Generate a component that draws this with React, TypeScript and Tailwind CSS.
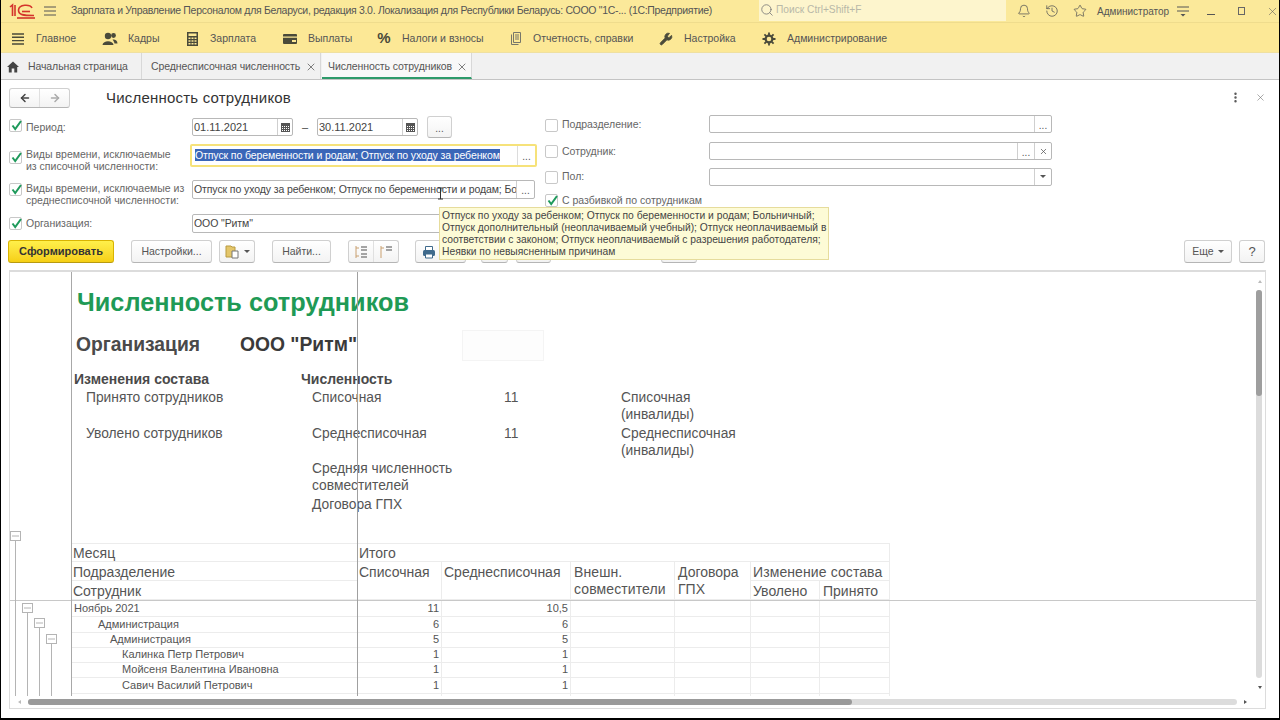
import type { ReactNode } from "react";
import {
  ArrowLeft,
  ArrowRight,
  Bell,
  History,
  MoreVertical,
  Search,
  Star,
  Wrench,
  X,
} from "lucide-react";

const Logo = () => (
  <svg width="26" height="16" viewBox="0 0 26 16" fill="none" stroke="#d4342c" strokeWidth="1.6">
    <path d="M1 4 L3.5 2 V13" />
    <path d="M6 2 V13" />
    <path d="M23 5 C21 1 10 1 9.5 7 C9.5 12 14 12.5 25 12.5" />
    <path d="M21 8.5 H13" />
    <path d="M8 15 H26" />
  </svg>
);

const Calendar = () => (
  <svg width="9" height="10" viewBox="0 0 9 10" fill="#555">
    <path fillRule="evenodd" d="M0 1h9v9H0zM1 4v1h1V4zm2 0v1h1V4zm2 0v1h1V4zm2 0v1h1V4zM1 6v1h1V6zm2 0v1h1V6zm2 0v1h1V6zm2 0v1h1V6zM1 8v1h1V8zm2 0v1h1V8zm2 0v1h1V8zm2 0v1h1V8z" />
  </svg>
);

const Gear = () => (
  <svg width="14" height="14" viewBox="0 0 14 14" fill="none" stroke="#4a4a3a">
    <circle cx="7" cy="7" r="3.4" strokeWidth="2.2" />
    <path d="M7 0.5V3M7 11V13.5M0.5 7H3M11 7H13.5M2.4 2.4L4.2 4.2M9.8 9.8L11.6 11.6M11.6 2.4L9.8 4.2M4.2 9.8L2.4 11.6" strokeWidth="1.8" />
  </svg>
);

const MenuItem = ({ icon, label, className }: { icon: ReactNode; label: string; className: string }) => (
  <div className={`flex items-center shrink-0 ${className}`}>
    <span className="flex w-[18px] h-4 items-center justify-center text-[#4a4a3a]">{icon}</span>
    <span className="ml-[9px] whitespace-nowrap">{label}</span>
  </div>
);

const Check = ({ on, className = "" }: { on?: boolean; className?: string }) => (
  <div className={`w-[13px] h-[13px] shrink-0 border border-[#c8c8c8] rounded-[2px] bg-white relative ${className}`}>
    {on && (
      <svg className="absolute left-0 -top-[1px]" width="13" height="13" viewBox="0 0 13 13" fill="none">
        <path d="M2.5 6.5 L5.2 10 L11 2" stroke="#1f9a5c" strokeWidth="2" />
      </svg>
    )}
  </div>
);

const Dots = () => <span className="text-[10px] leading-none text-[#555] mt-[3px]">...</span>;

const Caret = () => <span className="w-0 h-0 border-x-[3px] border-x-transparent border-t-[3px] border-t-[#555]" />;

const Btn = ({ children, className }: { children?: ReactNode; className: string }) => (
  <div className={`flex items-center justify-center shrink-0 rounded-[3px] border border-[#d0d0d0] border-b-[#b5b5b5] bg-gradient-to-b from-white to-[#f3f3f3] text-[#555] text-[10.5px] ${className}`}>
    {children}
  </div>
);

const Input = ({ width, height = "h-[19px]", children, text, textClass = "text-[10.5px] tracking-[-0.1px]" }: { width: string; height?: string; children?: ReactNode; text?: string; textClass?: string }) => (
  <div className={`flex items-stretch shrink-0 bg-white border border-[#b8b8b8] rounded-[2px] ${width} ${height}`}>
    <span className={`flex-1 min-w-0 overflow-hidden whitespace-nowrap pl-[1px] leading-[17px] text-[#444] ${textClass}`}>{text}</span>
    {children}
  </div>
);

const Side = ({ w = "w-[17px]", children }: { w?: string; children: ReactNode }) => (
  <span className={`flex shrink-0 items-center justify-center border-l border-[#cfcfcf] text-[#555] ${w}`}>{children}</span>
);

const FormLabel = ({ children, className = "" }: { children: ReactNode; className?: string }) => (
  <div className={`ml-[4px] w-[160px] text-[10.5px] leading-[12px] text-[#666] ${className}`}>{children}</div>
);

// rows of the report body
const rows = [
  { name: "Ноябрь 2021", indent: "pl-[2px]", a: "11", b: "10,5", h: "h-[16px]" },
  { name: "Администрация", indent: "pl-[26px]", a: "6", b: "6", h: "h-[15px]" },
  { name: "Администрация", indent: "pl-[38px]", a: "5", b: "5", h: "h-[15px]" },
  { name: "Калинка Петр Петрович", indent: "pl-[50px]", a: "1", b: "1", h: "h-[15px]" },
  { name: "Мойсеня Валентина Ивановна", indent: "pl-[50px]", a: "1", b: "1", h: "h-[16px]" },
  { name: "Савич Василий Петрович", indent: "pl-[50px]", a: "1", b: "1", h: "h-[15px]" },
  { name: "Мазур Светлана Петровна", indent: "pl-[50px]", a: "1", b: "1", h: "h-[15px]" },
];

const tableCols = "grid grid-cols-[286px_84px_129px_104px_76px_69px_70px]";
const cell = "border-r border-b border-[#ececec]";

export default function App() {
  return (
    <div className="relative w-[1280px] h-[720px] overflow-hidden flex flex-col bg-white border-l border-r border-b-2 border-black font-['Liberation_Sans',Arial,sans-serif] text-[#444]">
      {/* title bar */}
      <div className="h-[23px] shrink-0 flex items-center bg-[#fbe99a] border-b border-[#efdc8d] text-[10.5px] text-[#555]">
        <div className="ml-[8px]"><Logo /></div>
        <svg className="ml-[9px]" width="12" height="12" viewBox="0 0 12 12" stroke="#555" strokeWidth="1"><path d="M0 2h12M0 6h12M0 10h12" /></svg>
        <span className="ml-[15px] w-[688px] whitespace-nowrap overflow-hidden tracking-[-0.3px]">Зарплата и Управление Персоналом для Беларуси, редакция 3.0. Локализация для Республики Беларусь: СООО "1С-... (1С:Предприятие)</span>
        <div className="w-[247px] h-[21px] -mt-[2px] flex items-center bg-[#fdf5cd] text-[#b8b8a8] text-[10.2px]">
          <Search size={14} strokeWidth={1.4} className="ml-[1px] text-[#777]" />
          <span className="ml-[2px]">Поиск Ctrl+Shift+F</span>
        </div>
        <Bell size={14} strokeWidth={1.3} className="ml-[11px]" />
        <History size={14} strokeWidth={1.3} className="ml-[14px]" />
        <Star size={14} strokeWidth={1.3} className="ml-[14px]" />
        <span className="ml-[10px] text-[10px] w-[71px] whitespace-nowrap">Администратор</span>
        <svg className="ml-[8px]" width="14" height="12" viewBox="0 0 14 12" fill="#555" stroke="#555" strokeWidth="1"><path d="M1 2h12M1 6h12" /><path d="M4.5 9 h5 l-2.5 2.5z" stroke="none" /></svg>
        <span className="ml-[17px] w-[8px] h-px bg-[#555] mt-[7px]" />
        <span className="ml-[23px] w-[7px] h-[8px] border border-[#666]" />
        <X size={13} strokeWidth={1} className="ml-[21px]" />
      </div>

      {/* section menu */}
      <div className="h-[30px] shrink-0 flex items-center pt-[2px] pl-[8px] bg-[#fce896] text-[10.5px] text-[#555] border-b border-[#efe0a0]">
        <MenuItem className="w-[92px]" label="Главное" icon={<svg width="14" height="12" viewBox="0 0 14 12" stroke="#4a4a3a" strokeWidth="1.4"><path d="M1 1h12M1 4.3h12M1 7.6h12M1 11h12" /></svg>} />
        <MenuItem className="w-[82px]" label="Кадры" icon={<svg width="16" height="14" viewBox="0 0 16 14" fill="#4a4a3a"><circle cx="6" cy="4" r="3.2" /><circle cx="11.5" cy="3.5" r="2.4" /><path d="M0.5 13 C1 8 11 8 11.5 13Z" /><path d="M10.5 7.5 C13 7 15.5 8.5 15.5 11.5 H12.5 C12.3 10 11.5 8.7 10.5 7.5Z" /></svg>} />
        <MenuItem className="w-[98px]" label="Зарплата" icon={<svg width="11" height="14" viewBox="0 0 11 14" fill="#4a4a3a"><path fillRule="evenodd" d="M0 0h11v14H0zM1.5 1.5v2.5h8V1.5zM1.5 5.5v1.6h2V5.5zm3 0v1.6h2V5.5zm3 0v1.6h2V5.5zM1.5 8.2v1.6h2V8.2zm3 0v1.6h2V8.2zm3 0v1.6h2V8.2zM1.5 11v1.6h2V11zm3 0v1.6h2V11zm3 0v1.6h2V11z" /></svg>} />
        <MenuItem className="w-[94px]" label="Выплаты" icon={<svg width="14" height="10" viewBox="0 0 14 10" fill="#4a4a3a"><path fillRule="evenodd" d="M1 0h12a1 1 0 0 1 1 1v8a1 1 0 0 1-1 1H1a1 1 0 0 1-1-1V1a1 1 0 0 1 1-1zM0 2.5h14v1.2H0zM9 6h4v2H9z" /></svg>} />
        <MenuItem className="w-[131px]" label="Налоги и взносы" icon={<span className="text-[15px] font-bold">%</span>} />
        <MenuItem className="w-[151px]" label="Отчетность, справки" icon={<svg width="13" height="15" viewBox="0 0 13 15" fill="none" stroke="#77776a"><path d="M4.5 1.5h7v10h-7zM2.5 3.5v10h7M6 4h4M6 6h4M6 8h4" /></svg>} />
        <MenuItem className="w-[103px]" label="Настройка" icon={<Wrench size={14} fill="currentColor" strokeWidth={1.5} />} />
        <MenuItem className="" label="Администрирование" icon={<Gear />} />
      </div>

      {/* open tabs */}
      <div className="h-[27px] shrink-0 flex items-stretch bg-[#f1f1f1] border-b border-[#c4c4c4] text-[10.5px] text-[#555]">
        <div className="w-[141px] flex items-center border-r border-[#d8d8d8] pt-[2px]">
          <svg className="ml-[6px]" width="12" height="12" viewBox="0 0 12 12" fill="#444"><path d="M6 0.5 L12 6 H10.2 V11.5 H7.3 V7.5 H4.7 V11.5 H1.8 V6 H0Z" /></svg>
          <span className="ml-[9px] whitespace-nowrap tracking-[-0.1px]">Начальная страница</span>
        </div>
        <div className="w-[179px] flex items-center border-r border-[#d8d8d8] pl-[9px] pt-[2px]">
          <span className="w-[150px] whitespace-nowrap tracking-[-0.1px]">Среднесписочная численность</span>
          <X size={12} strokeWidth={1.5} className="ml-[4px]" />
        </div>
        <div className="ml-[1px] w-[150px] flex items-center bg-[#f8f8f8] border-r border-[#d8d8d8] border-b-2 border-b-[#2d9a6a] pl-[6px] pt-[3px]">
          <span className="w-[127px] whitespace-nowrap tracking-[-0.1px]">Численность сотрудников</span>
          <X size={12} strokeWidth={1.5} className="ml-[1px]" />
        </div>
      </div>

      {/* form header */}
      <div className="h-[33px] shrink-0 flex items-center pl-[8px] pr-[13px] pt-[2px]">
        <div className="flex w-[61px] h-[20px] rounded-[3px] border border-[#d0d0d0] border-b-[#b5b5b5] bg-gradient-to-b from-white to-[#f3f3f3]">
          <span className="flex-1 flex items-center justify-center border-r border-[#e0e0e0]"><ArrowLeft size={12} strokeWidth={3} className="text-[#444]" /></span>
          <span className="flex-1 flex items-center justify-center"><ArrowRight size={12} strokeWidth={3} className="text-[#aaa]" /></span>
        </div>
        <h1 className="ml-[36px] mt-[1px] text-[15px] tracking-[0.2px] text-[#333]">Численность сотрудников</h1>
        <MoreVertical size={13} strokeWidth={2.5} className="ml-auto mr-[13px] text-[#555]" />
        <X size={11} strokeWidth={1.2} className="text-[#666]" />
      </div>

      {/* filter form */}
      <div className="h-[126px] shrink-0 flex pl-[8px]">
        <div className="w-[536px] shrink-0 flex flex-col pt-[1px]">
          <div className="h-[26px] flex items-center">
            <Check on className="-mt-[3px]" />
            <FormLabel>Период:</FormLabel>
            <div className="ml-[6px] flex items-center">
              <Input width="w-[101px]" height="h-[18px]" text="01.11.2021" textClass="text-[11px]"><Side w="w-[15px]"><Calendar /></Side></Input>
              <span className="w-[24px] text-center text-[11px]">–</span>
              <Input width="w-[101px]" height="h-[18px]" text="30.11.2021" textClass="text-[11px]"><Side w="w-[15px]"><Calendar /></Side></Input>
              <Btn className="ml-[9px] w-[25px] h-[22px]"><Dots /></Btn>
            </div>
          </div>
          <div className="h-[30px] flex items-center">
            <Check on className="mt-[4px]" />
            <FormLabel className="mt-[10px]">Виды времени, исключаемые<br />из списочной численности:</FormLabel>
            <div className="ml-[4px] flex w-[347px] h-[23px] bg-white border-2 border-[#f6e27a] rounded-[2px] pl-[3px] items-center">
              <span className="flex-1 min-w-0 whitespace-nowrap overflow-hidden text-[10.5px] tracking-[-0.1px] leading-[13px]">
                <span className="bg-[#3a66b8] text-white">Отпуск по беременности и родам; Отпуск по уходу за ребенком</span>
              </span>
              <span className="w-[18px] h-full flex items-center justify-center border-l border-[#dcdcdc]"><Dots /></span>
            </div>
          </div>
          <div className="h-[38px] flex items-center">
            <Check on />
            <FormLabel className="mt-[10px]">Виды времени, исключаемые из<br />среднесписочной численности:</FormLabel>
            <div className="ml-[6px]">
              <Input width="w-[343px]" text="Отпуск по уходу за ребенком; Отпуск по беременности и родам; Больничный"><Side w="w-[18px]"><Dots /></Side></Input>
            </div>
          </div>
          <div className="h-[30px] flex items-center">
            <Check on />
            <FormLabel>Организация:</FormLabel>
            <div className="ml-[6px]">
              <Input width="w-[343px]" text={'ООО "Ритм"'} />
            </div>
          </div>
        </div>
        <div className="flex-1 flex flex-col -mt-[2px]">
          <div className="h-[26px] shrink-0 flex items-center">
            <Check className="mt-[2px]" />
            <span className="ml-[4px] mt-[2px] w-[147px] text-[10.5px] text-[#666]">Подразделение:</span>
            <Input width="w-[343px]" height="h-[18px]"><Side><Dots /></Side></Input>
          </div>
          <div className="h-[28px] shrink-0 flex items-center">
            <Check />
            <span className="ml-[4px] mt-[2px] w-[147px] text-[10.5px] text-[#666]">Сотрудник:</span>
            <Input width="w-[343px]" height="h-[18px]"><Side><Dots /></Side><Side><X size={9} /></Side></Input>
          </div>
          <div className="h-[23px] shrink-0 flex items-center">
            <Check className="mt-[1px]" />
            <span className="ml-[4px] w-[147px] text-[10.5px] text-[#666]">Пол:</span>
            <Input width="w-[343px]" height="h-[18px]"><Side><Caret /></Side></Input>
          </div>
          <div className="h-[25px] shrink-0 flex items-center">
            <Check on className="-mt-[1px]" />
            <span className="ml-[4px] text-[10.5px] text-[#666]">С разбивкой по сотрудникам</span>
          </div>
        </div>
      </div>

      {/* report toolbar */}
      <div className="h-[31px] shrink-0 flex items-start pl-[7px] pr-[14px] pt-[1px]">
        <div className="w-[106px] h-[23px] shrink-0 flex items-center justify-center rounded-[3px] border border-[#d9b400] border-b-[#b89a10] bg-gradient-to-b from-[#fff04a] to-[#f6cf12] text-[11px] font-bold text-[#333]">Сформировать</div>
        <Btn className="ml-[17px] w-[81px] h-[23px]">Настройки...</Btn>
        <Btn className="ml-[7px] w-[36px] h-[23px] gap-[3px]">
          <svg width="16" height="15" viewBox="0 0 16 15"><path d="M1 2h5l1 1h3v10H1z" fill="#e4c66a" stroke="#b89a40" /><path d="M7 7h6v7H7z" fill="#fff" stroke="#777" /></svg>
          <Caret />
        </Btn>
        <Btn className="ml-[17px] w-[59px] h-[23px]">Найти...</Btn>
        <div className="ml-[17px] flex w-[51px] h-[23px] shrink-0 rounded-[3px] border border-[#d0d0d0] border-b-[#b5b5b5] bg-gradient-to-b from-white to-[#f3f3f3]">
          <span className="flex-1 flex items-center justify-center border-r border-[#e0e0e0]">
            <svg width="14" height="14" viewBox="0 0 14 14" fill="none" stroke="#c9a070"><path d="M2 1v12M2 3h3M2 11h3" /><path d="M7 2h6M7 5h6M7 9h6M7 12h6" stroke="#888" strokeWidth="1.5" /></svg>
          </span>
          <span className="flex-1 flex items-center justify-center">
            <svg width="14" height="14" viewBox="0 0 14 14" fill="none" stroke="#c9a070"><path d="M2 1v12M2 3h3" /><path d="M7 2h6M7 5h6" stroke="#888" strokeWidth="1.5" /></svg>
          </span>
        </div>
        <Btn className="ml-[16px] w-[51px] h-[23px] justify-start pl-[6px]">
          <svg width="14" height="14" viewBox="0 0 14 14"><path d="M3.5 1.5h7v5h-7z" fill="#fff" stroke="#3f6a8c" /><rect x="1" y="5" width="12" height="6" rx="1.5" fill="#3f6a8c" /><path d="M3.5 9h7v4h-7z" fill="#fff" stroke="#3f6a8c" /></svg>
        </Btn>
        {/* these lie mostly behind the tooltip, only their lower edges show */}
        <Btn className="ml-[15px] w-[27px] h-[23px]" />
        <Btn className="ml-[8px] w-[35px] h-[23px]" />
        <Btn className="ml-[110px] w-[36px] h-[23px]" />
        <Btn className="ml-auto w-[48px] h-[23px] gap-[4px]">Еще<Caret /></Btn>
        <Btn className="ml-[7px] w-[26px] h-[23px] !text-[13px]">?</Btn>
      </div>

      {/* spreadsheet */}
      <div className="ml-[8px] mr-[13px] h-[439px] shrink-0 flex flex-col border-t-2 border-x border-b border-[#dcdcdc] overflow-hidden">
        <div className="flex-1 min-h-0 flex">
          <div className="relative flex-1 min-w-0 overflow-hidden">
            {/* report heading */}
            <div className="pl-[67px] h-[61px] flex items-center whitespace-nowrap text-[25.3px] font-bold text-[#1f9a56]">Численность сотрудников</div>
            <div className="pl-[66px] h-[24px] flex items-center whitespace-nowrap text-[19.3px] font-bold text-[#4a4a4a]">
              <span className="w-[164px]">Организация</span>
              <span className="text-[#3a3a3a]">ООО "Ритм"</span>
            </div>
            <div className="mt-[14px] pl-[64px] grid grid-cols-[227px_203px_117px_200px] text-[13.8px] leading-[17px] text-[#555]">
              <div className="font-bold text-[14px] text-[#4a4a4a] h-[18px]">Изменения состава</div>
              <div className="font-bold text-[14px] text-[#4a4a4a] col-span-3">Численность</div>
              <div className="pl-[12px] h-[36px]">Принято сотрудников</div>
              <div className="pl-[11px]">Списочная</div>
              <div>11</div>
              <div>Списочная<br />(инвалиды)</div>
              <div className="pl-[12px] h-[35px]">Уволено сотрудников</div>
              <div className="pl-[11px]">Среднесписочная</div>
              <div>11</div>
              <div>Среднесписочная<br />(инвалиды)</div>
              <div />
              <div className="pl-[11px] col-span-3 h-[36px]">Средняя численность<br />совместителей</div>
              <div />
              <div className="pl-[11px] col-span-3 h-[47px]">Договора ГПХ</div>
            </div>

            {/* column headers */}
            <div className={`ml-[62px] ${tableCols} w-[818px] border-t border-[#ececec] grid-rows-[18px_19px_19px] text-[14px] leading-[17px] text-[#555]`}>
              <div className={`${cell} pl-[1px] pt-[1px]`}>Месяц</div>
              <div className={`${cell} col-span-6 pl-[1px] pt-[1px]`}>Итого</div>
              <div className={`${cell} pl-[1px] pt-[2px]`}>Подразделение</div>
              <div className={`${cell} row-span-2 pl-[1px] pt-[2px]`}>Списочная</div>
              <div className={`${cell} row-span-2 pl-[2px] pt-[2px]`}>Среднесписочная</div>
              <div className={`${cell} row-span-2 pl-[3px] pt-[2px] tracking-[0.1px]`}>Внешн.<br />совместители</div>
              <div className={`${cell} row-span-2 pl-[3px] pt-[2px]`}>Договора<br />ГПХ</div>
              <div className={`${cell} col-span-2 pl-[2px] pt-[2px] whitespace-nowrap tracking-[0.1px]`}>Изменение состава</div>
              <div className={`${cell} pl-[1px] pt-[2px]`}>Сотрудник</div>
              <div className={`${cell} pl-[2px] pt-[2px]`}>Уволено</div>
              <div className={`${cell} pl-[3px] pt-[2px]`}>Принято</div>
            </div>
            <div className="h-px bg-[#c8c8c8]" />

            {/* body rows */}
            <div className="ml-[62px] w-[818px] text-[11px] text-[#555]">
              {rows.map((r, i) => (
                <div key={i} className={`${tableCols} ${r.h} leading-[15px]`}>
                  <div className={`${cell} ${r.indent} whitespace-nowrap`}>{r.name}</div>
                  <div className={`${cell} text-right pr-[2px]`}>{r.a}</div>
                  <div className={`${cell} text-right pr-[2px]`}>{r.b}</div>
                  <div className={cell} />
                  <div className={cell} />
                  <div className={cell} />
                  <div className={cell} />
                </div>
              ))}
            </div>

            {/* freeze lines and group tree lie over the report */}
            <div className="absolute left-[61px] top-0 bottom-0 w-px bg-[#a8a8a8]" />
            <div className="absolute left-[347px] top-0 bottom-0 w-px bg-[#a0a0a0]" />
            <div className="absolute left-[452px] top-[58px] w-[82px] h-[31px] border border-[#f4f4f4] bg-[#fdfdfd]" />
            <svg className="absolute left-0 top-[258px]" width="60" height="170" viewBox="0 0 60 170" fill="none" stroke="#b4b4b4">
              <path d="M5.5 11V170M17.5 83V170M29.5 98V170M41.5 114V170" />
              <g fill="#fff">
                <rect x="0.5" y="1.5" width="10" height="9" />
                <rect x="12.5" y="73.5" width="10" height="9" />
                <rect x="24.5" y="88.5" width="10" height="9" />
                <rect x="36.5" y="104.5" width="10" height="9" />
              </g>
              <path d="M2 6H9M14 78H21M26 93H33M38 109H45" />
            </svg>
          </div>

          {/* vertical scrollbar */}
          <div className="w-[9px] shrink-0 flex flex-col items-start">
            <span className="ml-[2px] mt-[8px] w-0 h-0 border-x-[2px] border-x-transparent border-b-[3px] border-b-[#bbb]" />
            <div className="mt-[7px] w-[6px] h-[388px] rounded-[3px] bg-[#dcdcdc]">
              <div className="w-[6px] h-[106px] rounded-[3px] bg-[#9e9e9e]" />
            </div>
            <span className="ml-[2px] mt-[8px] w-0 h-0 border-x-[2px] border-x-transparent border-t-[3px] border-t-[#555]" />
          </div>
        </div>

        {/* horizontal scrollbar */}
        <div className="h-[12px] shrink-0 flex items-center">
          <span className="ml-[8px] w-0 h-0 border-y-[2px] border-y-transparent border-r-[3px] border-r-[#bbb]" />
          <div className="ml-[7px] w-[1209px] h-[6px] rounded-[3px] bg-[#dcdcdc]">
            <div className="w-[824px] h-[6px] rounded-[3px] bg-[#9a9a9a]" />
          </div>
          <span className="ml-[7px] w-0 h-0 border-y-[2px] border-y-transparent border-l-[3px] border-l-[#555]" />
        </div>
      </div>

      {/* tooltip over the form */}
      <div className="absolute left-[438px] top-[207px] w-[390px] h-[53px] bg-[#fdfbd6] border border-[#e6dc9c] pl-[2px] pt-[2px] text-[10.3px] leading-[12px] text-[#444] whitespace-nowrap">
        Отпуск по уходу за ребенком; Отпуск по беременности и родам; Больничный;<br />
        Отпуск дополнительный (неоплачиваемый учебный); Отпуск неоплачиваемый в<br />
        соответствии с законом; Отпуск неоплачиваемый с разрешения работодателя;<br />
        Неявки по невыясненным причинам
      </div>
      {/* I-beam mouse cursor */}
      <svg className="absolute left-[436px] top-[187px]" width="7" height="13" viewBox="0 0 7 13" fill="none" stroke="#333"><path d="M1 1h5M3.5 1v11M1 12h5" /></svg>
    </div>
  );
}
